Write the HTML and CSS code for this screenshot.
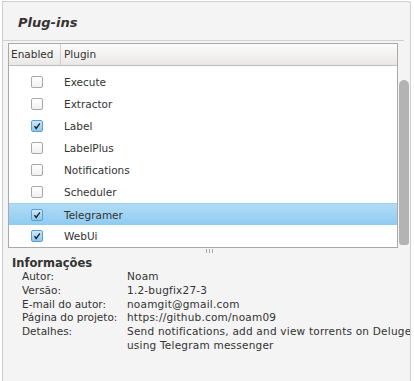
FILE: index.html
```html
<!DOCTYPE html>
<html>
<head>
<meta charset="utf-8">
<link rel="stylesheet" href="styles.css">
</head>
<body>
<div class="frame">
  <div class="title">Plug-ins</div>
  <div class="listrow">
    <div class="list">
      <div class="head">
        <div class="hcell c1">Enabled</div>
        <div class="hcell c2">Plugin</div>
      </div>
      <div class="rows">
        <div class="row"><div class="c1"><span class="cb"></span></div><div class="c2">Execute</div></div>
        <div class="row"><div class="c1"><span class="cb"></span></div><div class="c2">Extractor</div></div>
        <div class="row"><div class="c1"><span class="cb on"><svg viewBox="0 0 12 12"><path d="M3 6.2 L5 9 L9.5 2.8" fill="none" stroke="#222" stroke-width="1.6"/></svg></span></div><div class="c2">Label</div></div>
        <div class="row"><div class="c1"><span class="cb"></span></div><div class="c2">LabelPlus</div></div>
        <div class="row"><div class="c1"><span class="cb"></span></div><div class="c2">Notifications</div></div>
        <div class="row"><div class="c1"><span class="cb"></span></div><div class="c2">Scheduler</div></div>
        <div class="row sel"><div class="c1"><span class="cb on"><svg viewBox="0 0 12 12"><path d="M3 6.2 L5 9 L9.5 2.8" fill="none" stroke="#222" stroke-width="1.6"/></svg></span></div><div class="c2">Telegramer</div></div>
        <div class="row"><div class="c1"><span class="cb on"><svg viewBox="0 0 12 12"><path d="M3 6.2 L5 9 L9.5 2.8" fill="none" stroke="#222" stroke-width="1.6"/></svg></span></div><div class="c2">WebUi</div></div>
      </div>
    </div>
    <div class="scroll"><div class="thumb"></div></div>
  </div>
  <div class="splitter"><span></span><span></span><span></span></div>
  <div class="info">
    <div class="ititle">Informações</div>
    <div class="grid">
      <div>Autor:</div><div class="val">Noam</div>
      <div>Versão:</div><div class="val">1.2-bugfix27-3</div>
      <div>E-mail do autor:</div><div class="val">noamgit@gmail.com</div>
      <div>Página do projeto:</div><div class="val">https://github.com/noam09</div>
      <div>Detalhes:</div><div class="val">Send notifications, add and view torrents on Deluge using Telegram messenger</div>
    </div>
  </div>
</div>
</body>
</html>
```
FILE: styles.css
```css
html, body {
  margin: 0;
  padding: 0;
  background: #ffffff;
  font-family: "DejaVu Sans", Verdana, sans-serif;
  font-size: 10.5px;
  color: #333333;
  overflow: hidden;
}
.frame {
  margin: 1px 0 0 2px;
  width: 409px;
  height: 380px;
  border: 1px solid #cfcfcf;
  border-bottom: none;
  border-top-right-radius: 3px;
  background: #f4f4f4;
  box-sizing: border-box;
  overflow: hidden;
}
.title {
  height: 39px;
  box-sizing: border-box;
  padding: 13px 0 0 15px;
  font-weight: bold;
  font-style: italic;
  font-size: 13px;
  color: #333;
  border-bottom: 1px solid #d0d0d0;
  margin-right: 6px;
}
.listrow {
  display: flex;
  margin-top: 2px;
  margin-left: 5px;
}
.list {
  width: 390px;
  height: 205px;
  box-sizing: border-box;
  border: 1px solid #a9a9a9;
  background: #ffffff;
}
.head {
  display: flex;
  height: 22px;
  box-sizing: border-box;
  background: linear-gradient(#fcfcfc, #e9e8e6);
  border-bottom: 1px solid #bdbdbd;
}
.hcell {
  line-height: 21px;
  padding-left: 2px;
}
.head .c1 {
  border-right: 1px solid #cfcfcf;
  width: 49px;
}
.head .c2 {
  padding-left: 3px;
}
.rows {
  padding-top: 5px;
}
.row {
  display: flex;
  height: 22px;
  align-items: center;
  box-sizing: border-box;
}
.row .c1 {
  width: 52px;
  display: flex;
  justify-content: center;
  padding-left: 3px;
  box-sizing: border-box;
}
.row .c2 {
  padding-left: 3px;
  color: #333;
}
.row.sel {
  background: linear-gradient(#b2dcf6, #8ecbf1);
  border-top: 1px solid #9fcfee;
}
.cb {
  width: 12px;
  height: 12px;
  box-sizing: border-box;
  border: 1px solid #a8a8a8;
  border-radius: 2px;
  background: linear-gradient(#ffffff, #f0f0f0);
  display: block;
}
.cb.on {
  border-color: #5a9fd0;
  background: linear-gradient(#cfe8fa, #8cc6ef);
}
.cb svg {
  display: block;
  width: 10px;
  height: 10px;
}
.scroll {
  width: 10px;
  margin-left: 1px;
  height: 204px;
  padding-top: 37px;
  box-sizing: border-box;
}
.thumb {
  width: 10px;
  height: 165px;
  background: #b3b3b3;
  border-radius: 5px 5px 3px 3px;
}
.splitter {
  display: flex;
  justify-content: center;
  gap: 2px;
  height: 6px;
  padding-top: 1px;
  box-sizing: border-box;
  margin-left: 6px;
}
.splitter span {
  width: 1px;
  height: 4px;
  background: #a9a9a9;
}
.info {
  padding-left: 9px;
}
.ititle {
  font-weight: bold;
  font-size: 11.5px;
  line-height: 14px;
  margin-top: 2px;
}
.grid {
  display: grid;
  grid-template-columns: 105px 300px;
  padding-left: 10px;
  line-height: 13.8px;
}
.val {
  letter-spacing: 0.22px;
}
```
